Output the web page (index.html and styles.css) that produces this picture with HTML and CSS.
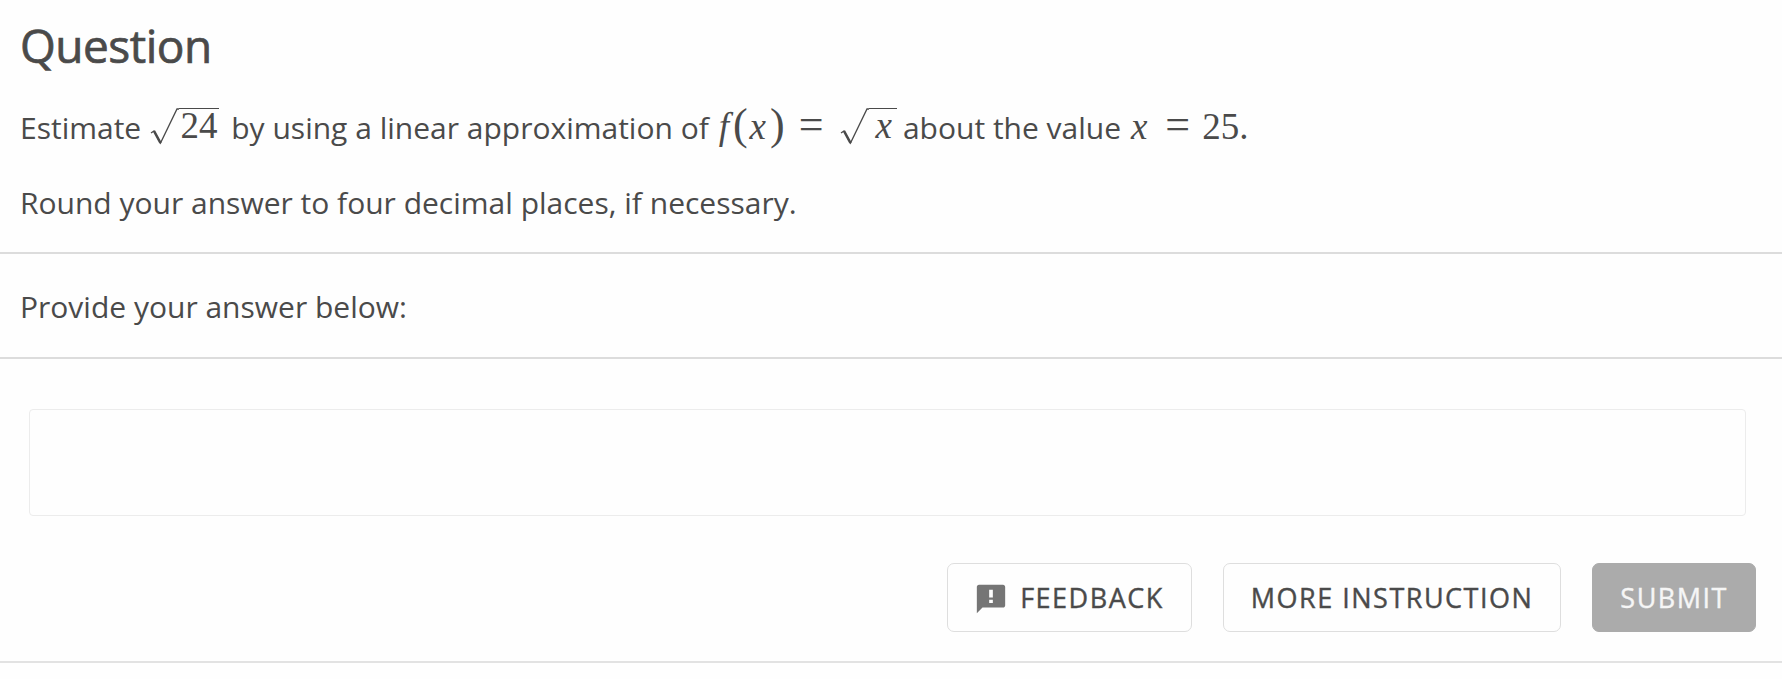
FILE: index.html
```html
<!DOCTYPE html>
<html lang="en">
<head>
    <meta charset="UTF-8">
    <meta name="viewport" content="width=device-width, initial-scale=1.0">
    <title>Question</title>
    <link rel="stylesheet" href="styles.css">
</head>
<body>
    <section class="question">
        <h2>Question</h2>
        <p class="first">Estimate <span class="math"><span class="sqrt"><svg class="radical" viewBox="0 0 29 37"><path d="M1 25 L4 23 L10.500 35 L27 1 L29 1"/><path class="thick" d="M4 23 L10.500 35"/></svg><span class="radicand">24</span></span> </span>by using a linear approximation of <span class="math"><i class="fn">f</i><span class="paren">(</span><i class="var">x</i><span class="paren">)</span><span class="eq">=</span><span class="sqrt"><svg class="radical" viewBox="0 0 29 37"><path d="M1 25 L4 23 L10.500 35 L27 1 L29 1"/><path class="thick" d="M4 23 L10.500 35"/></svg><span class="radicand wide"><i>x</i></span></span></span><span class="after-math">about the value</span> <span class="math"><i class="var">x</i><span class="eq">=</span>25.</span></p>
        <p>Round your answer to four decimal places, if necessary.</p>
    </section>
    <div class="prompt">Provide your answer below:</div>
    <div class="answer">
        <div class="answer-input"></div>
    </div>
    <div class="actions">
        <button class="btn feedback">
            <svg class="icon" viewBox="0 0 24 24"><path fill-rule="evenodd" d="M20.500 2H3.500C2.700 2 2 2.700 2 3.500V22l4-4h14.500c.8 0 1.500-.7 1.500-1.500v-13C22 2.700 21.300 2 20.500 2zM10.700 5.500h2.600V11h-2.600zM10.700 12.500h2.600v2.300h-2.600z"/></svg>
            FEEDBACK
        </button>
        <button class="btn">MORE INSTRUCTION</button>
        <button class="btn submit">SUBMIT</button>
    </div>
</body>
</html>
```

FILE: styles.css
```css
* {
    margin: 0;
    padding: 0;
    box-sizing: border-box;
}
body {
    background-color: #fefefe;
    color: #4a4a4a;
    font-family: "Open Sans", sans-serif;
    font-size: 30px;
    height: 679px;
    overflow: hidden;
}
.question {
    height: 254px;
    padding: 19px 20px 0;
    border-bottom: 2px solid #dcdcdc;
}
h2 {
    font-size: 46px;
    font-weight: 400;
    line-height: 52px;
    letter-spacing: -0.5px;
    -webkit-text-stroke: 0.7px #4a4a4a;
    margin-bottom: 33px;
}
.question p {
    line-height: 41px;
    white-space: nowrap;
}
.question p.first {
    margin-bottom: 34px;
}
.math {
    font-family: "Liberation Serif", serif;
    font-size: 37px;
}
.fn {
    padding: 0 4px 0 2px;
}
.var {
    padding: 0 4px 0 2px;
}
.paren {
    font-size: 44px;
    font-weight: 400;
}
.eq {
    font-size: 44px;
    margin: 0 14px;
}
.var + .eq {
    margin-right: 12px;
}
.sqrt {
    display: inline-flex;
    align-items: flex-end;
    vertical-align: -6px;
    height: 37px;
    margin: 0 3px 0 1px;
}
.eq + .sqrt {
    margin-left: 3px;
}
.radical {
    width: 29px;
    height: 37px;
}
.radical path {
    fill: none;
    stroke: #4a4a4a;
    stroke-width: 1.3;
}
.radical .thick {
    stroke-width: 2.6;
}
.radicand {
    border-top: 1.5px solid #4a4a4a;
    line-height: 34px;
    height: 37px;
    padding: 0 1.5px;
}
.radicand.wide {
    padding: 0 5px 0 6px;
}
.after-math {
    margin-left: 3px;
}
.prompt {
    height: 105px;
    padding: 2px 20px 0;
    display: flex;
    align-items: center;
    border-bottom: 2px solid #dcdcdc;
}
.answer {
    padding: 50px 36px 0 29px;
}
.answer-input {
    height: 107px;
    border: 1.5px solid #ececec;
    border-radius: 4px;
}
.actions {
    display: flex;
    justify-content: flex-end;
    gap: 31px;
    height: 100px;
    margin-top: 47px;
    padding: 0 26px 30px 0;
    border-bottom: 2px solid #e2e2e2;
}
.btn {
    display: flex;
    align-items: center;
    gap: 12px;
    height: 69px;
    padding: 0 27px;
    background: #fefefe;
    border: 1.5px solid #dedede;
    border-radius: 7px;
    color: #4a4a4a;
    font-family: "Open Sans", sans-serif;
    font-size: 27px;
    font-weight: 400;
    letter-spacing: 1.5px;
    -webkit-text-stroke: 0.4px currentColor;
}
.feedback {
    padding-left: 26px;
}
.submit {
    background: #ababab;
    border-color: #ababab;
    color: #f6f6f6;
}
.icon {
    width: 34px;
    height: 34px;
    fill: #757575;
    margin-top: 2px;
}
```
